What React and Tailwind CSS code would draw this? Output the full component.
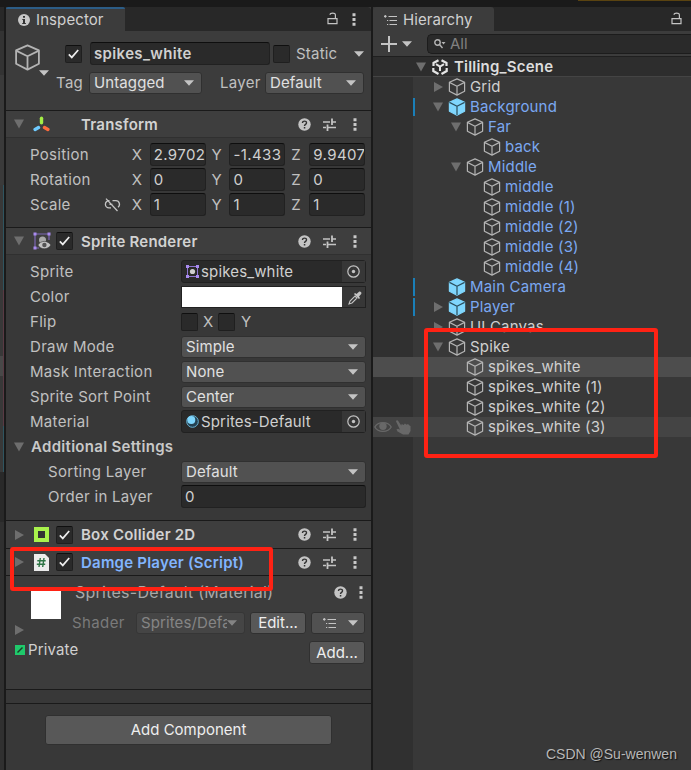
import clsx from "clsx";

const properties = [
  { label: "Draw Mode", value: "Simple" },
  { label: "Mask Interaction", value: "None" },
  { label: "Sprite Sort Point", value: "Center" },
];

const transform = [
  { label: "Position", values: ["2.9702", "-1.433", "9.9407"] },
  { label: "Rotation", values: ["0", "0", "0"] },
  { label: "Scale", values: ["1", "1", "1"], linked: true },
];

const nodes = [
  { name: "Grid", depth: 0, arrow: "right" },
  { name: "Background", depth: 0, arrow: "down", prefab: true, blue: true },
  { name: "Far", depth: 1, arrow: "down", blue: true },
  { name: "back", depth: 2, blue: true },
  { name: "Middle", depth: 1, arrow: "down", blue: true },
  { name: "middle", depth: 2, blue: true },
  { name: "middle (1)", depth: 2, blue: true },
  { name: "middle (2)", depth: 2, blue: true },
  { name: "middle (3)", depth: 2, blue: true },
  { name: "middle (4)", depth: 2, blue: true },
  { name: "Main Camera", depth: 0, prefab: true, blue: true },
  { name: "Player", depth: 0, arrow: "right", prefab: true, blue: true },
  { name: "UI Canvas", depth: 0, arrow: "right" },
  { name: "Spike", depth: 0, arrow: "down" },
  { name: "spikes_white", depth: 1, selected: true },
  { name: "spikes_white (1)", depth: 1 },
  { name: "spikes_white (2)", depth: 1 },
  { name: "spikes_white (3)", depth: 1, hover: true },
];

const indents = ["pl-[20px]", "pl-[38px]", "pl-[55px]"];

function Caret({ className = "" }) {
  return (
    <svg width="10" height="6" viewBox="0 0 10 6" className={clsx("shrink-0 fill-[#c4c4c4]", className)}>
      <path d="M0 .3h10L5 5.7z" />
    </svg>
  );
}

function Foldout({ dir, className = "" }) {
  return (
    <svg width="10" height="10" viewBox="0 0 10 10" className={clsx("shrink-0 overflow-visible fill-[#6e6e6e]", className)}>
      {dir === "down" && <path d="M0 .5h10L5 9.5z" />}
      {dir === "right" && <path d="M1 0v10l9-5z" />}
    </svg>
  );
}

function Cube({ size = 18, prefab = false, className = "" }) {
  return (
    <svg width={size} height={size} viewBox="0 0 18 18" className={clsx("shrink-0", className)} strokeLinejoin="round">
      <path
        d="M9 .9l7.6 3.3v9L9 17.1 1.4 13.2v-9z"
        fill={prefab ? "#7fd6fd" : "none"}
        stroke={prefab ? "#7fd6fd" : "#b4b4b4"}
        strokeWidth="1.2"
      />
      <path d="M1.4 4.4L9 8.2l7.6-3.8M9 8.2V17" fill="none" stroke={prefab ? "#2b4d5c" : "#b4b4b4"} strokeWidth="1.2" />
    </svg>
  );
}

function Dots() {
  return (
    <svg width="4" height="13" viewBox="0 0 4 13" className="shrink-0 fill-[#c8c8c8]">
      <path d="M.5.3h3v3h-3zM.5 5h3v3h-3zM.5 9.7h3v3h-3z" />
    </svg>
  );
}

function Lock() {
  return (
    <svg width="11" height="13" viewBox="0 0 11 13" className="mb-[2px] shrink-0" fill="none" stroke="#c4c4c4" strokeWidth="1.2">
      <path d="M1 6.6h9v5H1zM3 2.8C3.200.6 8.4.4 8.4 3v3.500" />
    </svg>
  );
}

function Help() {
  return (
    <svg width="13" height="13" viewBox="0 0 13 13" className="shrink-0">
      <circle cx="6.5" cy="6.5" r="6.2" fill="#c4c4c4" />
      <path d="M4.5 5C4.5 2.4 8.6 2.5 8.5 5c0 1.4-2 1.4-2 3" fill="none" stroke="#333" strokeWidth="1.4" />
      <path d="M5.8 9h1.5v1.5H5.8z" fill="#333" />
    </svg>
  );
}

function Preset() {
  return (
    <svg width="13" height="13" viewBox="0 0 13 13" className="shrink-0" fill="none" stroke="#c4c4c4" strokeWidth="1.5">
      <path d="M0 4h7M9 4h4M0 9.500h3M5 9.500h8" />
      <path d="M9 .5V7M4.500 6.500V13" strokeWidth="1.8" />
    </svg>
  );
}

function ListIcon() {
  return (
    <svg width="13" height="11" viewBox="0 0 13 11" className="shrink-0" fill="none" stroke="#c4c4c4" strokeWidth="1.1">
      <path d="M0 1.4h2.6M1.3 0v2.8M4.5 1.5H13M3 5.5h1.2M5.5 5.5H13M3 9.5h1.2M5.5 9.5H13" />
    </svg>
  );
}

function Check({ checked = false, className = "" }) {
  return (
    <span className={clsx("flex h-[18px] w-[17px] shrink-0 items-center justify-center rounded-[2px] border border-[#1f1f1f] border-t-[#0f0f0f] bg-[#2a2a2a]", className)}>
      {checked && (
        <svg width="11" height="10" viewBox="0 0 11 10" fill="none" stroke="#eee" strokeWidth="1.7">
          <path d="M.8 5.4l3 3L10.2 1" />
        </svg>
      )}
    </span>
  );
}

function Dropdown({ children, className = "", dim = false }) {
  return (
    <div className={clsx("flex h-[22px] items-center justify-between rounded-[3px] border pr-[7px] pl-1 tracking-[0.1px]", dim ? "border-[#363636] bg-[#454545] text-[#858585]" : "border-[#303030] bg-[#515151] text-[#e0e0e0]", className)}>
      <span className="overflow-hidden">{children}</span>
      <Caret className={dim ? "opacity-50" : ""} />
    </div>
  );
}

function Field({ children, className = "" }) {
  return (
    <div className={clsx("flex h-[23px] items-center overflow-hidden rounded-[3px] border border-[#212121] border-t-[#0e0e0e] bg-[#2a2a2a] pt-px pl-[3px] text-[#d0d0d0]", className)}>
      {children}
    </div>
  );
}

function ComponentHeader({ title, icon, open = false, checkbox = true, blue = false, className = "" }) {
  return (
    <div className={clsx("flex items-center border-t border-t-[#1a1a1a] bg-[#3e3e3e] pr-[14px] pl-2", className)}>
      <Foldout dir={open ? "down" : "right"} />
      <span className="ml-[9px] flex w-[17px] justify-center">{icon}</span>
      {checkbox ? <Check checked className="mx-[6px]" /> : <span className="w-[29px]" />}
      <span className={clsx("ml-[2px] flex-1 pt-px font-semibold tracking-[0.22px]", blue ? "text-[#81b4ff]" : "text-[#d2d2d2]")}>{title}</span>
      <div className="flex items-center">
        <Help />
        <span className="mr-[17px] ml-3"><Preset /></span>
        <Dots />
      </div>
    </div>
  );
}

function Row({ label, children, indent = false }) {
  return (
    <div className="flex h-[25px] items-center">
      <span className={clsx("w-[175px] shrink-0 tracking-[0.3px] text-[#c0c0c0]", indent ? "pl-[42px]" : "pl-6")}>{label}</span>
      {children}
    </div>
  );
}

function SpriteIcon() {
  return (
    <svg width="13" height="13" viewBox="0 0 13 13" className="shrink-0">
      <path d="M1.5 1.5h10v10h-10z" fill="none" stroke="#8f74d0" />
      <path d="M0 0h3v3H0zM10 0h3v3h-3zM0 10h3v3H0zM10 10h3v3h-3z" fill="#a98bf0" />
      <circle cx="6.5" cy="6.5" r="2.6" fill="#cfcfcf" />
    </svg>
  );
}

function SpriteRendererIcon() {
  return (
    <svg width="18" height="18" viewBox="0 0 18 18" className="shrink-0">
      <path d="M2 16V2h14v6M2 16h4" fill="none" stroke="#7d68b5" strokeWidth="1.2" />
      <path d="M.5.5h3v3h-3zM14.5.5h3v3h-3zM.5 14.5h3v3h-3z" fill="#a98bf0" />
      <circle cx="9.5" cy="8" r="3.5" fill="#aaa" />
      <path d="M5 13c2.5-4.8 10-4.8 12.8 0-2.8 5-10.3 5-12.8 0z" fill="#c4c4c4" stroke="#3e3e3e" strokeWidth=".6" />
      <circle cx="11.4" cy="13" r="2.2" fill="#555" />
    </svg>
  );
}

function ObjectField({ icon, children }) {
  return (
    <div className="flex h-[23px] w-[185px] items-center rounded-[3px] border border-[#212121] bg-[#2a2a2a] pl-1 text-[#d0d0d0]">
      {icon}
      <span className="ml-[2px] flex-1 pt-px tracking-[0.15px]">{children}</span>
      <span className="flex h-[21px] w-[23px] items-center justify-center bg-[#373737]">
        <svg width="13" height="13" viewBox="0 0 13 13">
          <circle cx="6.5" cy="6.5" r="5.7" fill="none" stroke="#c4c4c4" strokeWidth="1.2" />
          <circle cx="6.5" cy="6.5" r="1.7" fill="#c4c4c4" />
        </svg>
      </span>
    </div>
  );
}

function Inspector() {
  return (
    <section className="flex w-[365px] shrink-0 flex-col bg-[#383838]">
      <div className="flex h-6 items-center justify-between rounded-t bg-[#282828] pr-[15px]">
        <div className="flex h-6 w-[119px] items-center rounded-t-[2px] border-t-2 border-[#2c5d87] bg-[#3c3c3c] pl-3 text-[#d0d0d0]">
          <svg width="12" height="12" viewBox="0 0 12 12">
            <circle cx="6" cy="6" r="6" fill="#c8c8c8" />
            <path d="M5 2h2v1.8H5zM4.3 5H7v4h.9v1H4.2V9H5V6h-.7z" fill="#333" />
          </svg>
          <span className="ml-[6px] tracking-[0.1px]">Inspector</span>
        </div>
        <div className="flex items-center gap-[14px]">
          <Lock />
          <Dots />
        </div>
      </div>

      <div className="flex h-[79px] bg-[#3c3c3c] pt-[11px] pl-2">
        <div className="relative w-[51px] pt-[2px]">
          <Cube size={27} />
          <Caret className="absolute top-[28px] left-[25px]" />
        </div>
        <div>
          <div className="flex h-[23px] items-center">
            <Check checked />
            <Field className="ml-2 w-[180px] font-semibold tracking-[0.35px]">spikes_white</Field>
            <Check className="ml-[3px]" />
            <span className="ml-[6px] w-[41px] tracking-[0.2px] text-[#c0c0c0]">Static</span>
            <Caret className="ml-[17px]" />
          </div>
          <div className="mt-[7px] flex items-center tracking-[0.3px] text-[#c0c0c0]">
            <span className="-ml-[9px] w-[33px]">Tag</span>
            <Dropdown className="w-[113px]">Untagged</Dropdown>
            <span className="ml-[18px] w-[45px]">Layer</span>
            <Dropdown className="w-[99px]">Default</Dropdown>
          </div>
        </div>
      </div>

      <ComponentHeader
        title="Transform"
        open
        checkbox={false}
        className="h-[28px] border-b border-b-[#303030]"
        icon={
          <svg width="17" height="17" viewBox="0 0 17 17" strokeWidth="3.4" fill="none" strokeLinecap="round">
            <path d="M8.5 2.2v4.500" stroke="#a4ee45" />
            <path d="M5.500 11.600l-3.400 1.900" stroke="#6fcbff" />
            <path d="M11.500 11.600l3.400 1.900" stroke="#ff6b3d" />
          </svg>
        }
      />
      <div className="h-[89px] pt-1">
        {transform.map((row) => (
          <div key={row.label} className="flex h-[25px] items-center text-[#c0c0c0]">
            <span className="w-[98px] pl-6 tracking-[0.3px]">{row.label}</span>
            <span className="w-7">
              {row.linked && (
                <svg width="17" height="14" viewBox="0 0 17 14" fill="none" stroke="#c4c4c4" strokeWidth="1.3">
                  <path d="M5.500 2.700H5a3.600 3.600 0 000 7.200h2M8.500 2.700H12a3.600 3.600 0 012 6.500M5.500 6.300h3M2 .6l11.500 12.400" />
                </svg>
              )}
            </span>
            {["X", "Y", "Z"].map((axis, i) => (
              <div key={axis} className="flex w-20 items-center">
                <span className="w-[18px]">{axis}</span>
                <Field className="w-14 tracking-[0.4px]">{row.values[i]}</Field>
              </div>
            ))}
          </div>
        ))}
      </div>

      <ComponentHeader title="Sprite Renderer" open className="h-[28px] border-b border-b-[#303030]" icon={<SpriteRendererIcon />} />
      <div className="h-[265px] pt-1">
        <Row label="Sprite">
          <ObjectField icon={<SpriteIcon />}>spikes_white</ObjectField>
        </Row>
        <Row label="Color">
          <div className="flex h-[22px] w-[185px] border border-[#212121] bg-[#373737]">
            <span className="w-[160px] bg-white" />
            <svg width="14" height="14" viewBox="0 0 14 14" className="mt-1 ml-[6px]">
              <path d="M1 13l1-3 5-5 2 2-5 5z" fill="none" stroke="#c4c4c4" strokeWidth="1.1" />
              <path d="M6 3l1-1 1.5 1L11 .7c1.5-.8 3 .8 2.2 2.2L11 5.5 12 7l-1 1z" fill="#c4c4c4" />
            </svg>
          </div>
        </Row>
        <Row label="Flip">
          <Check />
          <span className="w-5 pl-[5px] text-[#c0c0c0]">X</span>
          <Check />
          <span className="pl-[6px] text-[#c0c0c0]">Y</span>
        </Row>
        {properties.map((p) => (
          <Row key={p.label} label={p.label}>
            <Dropdown className="w-[185px]">{p.value}</Dropdown>
          </Row>
        ))}
        <Row label="Material">
          <ObjectField
            icon={
              <svg width="13" height="13" viewBox="0 0 13 13" className="shrink-0">
                <circle cx="6.5" cy="6.5" r="5.8" fill="#244152" stroke="#69b4d6" />
                <circle cx="5.3" cy="5" r="4" fill="#7fd6fd" />
              </svg>
            }
          >
            Sprites-Default
          </ObjectField>
        </Row>
        <div className="flex h-[25px] items-center pl-2">
          <Foldout dir="down" />
          <span className="ml-[7px] font-semibold tracking-[0.3px] text-[#c8c8c8]">Additional Settings</span>
        </div>
        <Row label="Sorting Layer" indent>
          <Dropdown className="w-[185px]">Default</Dropdown>
        </Row>
        <Row label="Order in Layer" indent>
          <Field className="w-[185px]">0</Field>
        </Row>
      </div>

      <ComponentHeader
        title="Box Collider 2D"
        className="h-[28px]"
        icon={<span className="h-[15px] w-[15px] border-[4px] border-[#a9f24c] bg-[#333]" />}
      />
      <ComponentHeader
        title="Damge Player (Script)"
        blue
        className="h-[27px]"
        icon={
          <svg width="15" height="17" viewBox="0 0 15 17">
            <path d="M0 0h11l4 4v13H0z" fill="#ececec" />
            <path d="M6.3 4L5 13M10 4l-1.3 9M3.3 6.8h8.4M2.8 10.3h8.4" stroke="#2f7546" strokeWidth="1.4" />
          </svg>
        }
      />

      <div className="h-[114px] border-t border-[#1a1a1a] bg-[#3c3c3c]">
        <div className="flex h-[65px]">
          <div className="flex w-[64px] flex-col pl-2">
            <span className="mt-[13px] ml-[17px] h-[30px] w-[30px] shrink-0 bg-white" />
            <Foldout dir="right" className="mt-[6px]" />
          </div>
          <div className="flex-1 pt-1">
            <div className="flex h-6 items-center pr-2">
              <span className="flex-1 pl-[5px] text-[16px] tracking-[0.25px] text-[#a8a8a8]">Sprites-Default (Material)</span>
              <span className="mr-[12px]"><Help /></span>
              <Dots />
            </div>
            <div className="mt-2 flex items-center">
              <span className="w-[66px] pl-[2px] tracking-[0.4px] text-[#7a7a7a]">Shader</span>
              <Dropdown dim className="w-[109px] pr-[6px]">Sprites/Defa</Dropdown>
              <button type="button" className="ml-[5px] h-[22px] w-14 rounded-[3px] border border-[#303030] bg-[#585858] text-[#eee]">Edit...</button>
              <button type="button" className="ml-[5px] flex h-[22px] w-[54px] items-center justify-between rounded-[3px] border border-[#303030] bg-[#515151] pr-[6px] pl-[11px]">
                <ListIcon />
                <Caret />
              </button>
            </div>
          </div>
        </div>
        <div className="flex pr-[6px] pl-[9px]">
          <svg width="10" height="10" viewBox="0 0 10 10" className="mt-1">
            <path d="M0 0h10v10H0z" fill="#1fc96b" />
            <path d="M2.5 7.5l5-5" stroke="#1c3a29" strokeWidth="1.5" />
          </svg>
          <span className="ml-[3px] flex-1 tracking-[0.15px] text-[#d0d0d0]">Private</span>
          <button type="button" className="h-[23px] w-14 rounded-[3px] border border-[#303030] bg-[#585858] text-[#eee]">Add...</button>
        </div>
      </div>
      <div className="h-[14px] border-t border-[#1a1a1a]" />
      <div className="flex-1 border-t border-[#1a1a1a] pt-[11px] pl-[39px]">
        <button type="button" className="h-[30px] w-[287px] rounded-[3px] border border-[#303030] bg-[#585858] text-[#eee]">Add Component</button>
      </div>
    </section>
  );
}

function TreeRow({ node }) {
  return (
    <div className={clsx("flex h-5", node.selected && "bg-[#4d4d4d]", node.hover && "bg-[#444444]")}>
      <div className={clsx("flex w-10 items-center gap-1", !node.selected && !node.hover && "bg-[#303030]")}>
        {node.hover && (
          <>
            <svg width="18" height="12" viewBox="0 0 18 12" className="ml-px">
              <path d="M.8 6C4 .2 14 .2 17.2 6 14 11.8 4 11.8.8 6z" fill="none" stroke="#686868" strokeWidth="1.3" />
              <circle cx="9" cy="5.3" r="3.7" fill="#686868" />
            </svg>
            <svg width="15" height="15" viewBox="0 0 15 15" fill="#686868">
              <path d="M0 1.3C.3 0 1.7 0 2.2 1l3 4.5.5-1.4 2 .8 1.2-1.4 1.7 1.2 1.4-.7 1.5 1.5 1 .5v5l-2 3.500H7l-5.500-3-1-2 1.500-.7 2 1z" />
            </svg>
          </>
        )}
      </div>
      <span className={clsx("w-[2px]", node.prefab && "my-px bg-[#1a7fb8]")} />
      <div className={clsx("flex items-center", indents[node.depth])}>
        <Foldout dir={node.arrow} className="-ml-[2px]" />
        <Cube prefab={node.prefab} className="ml-[5px]" />
        <span className={clsx("ml-1 tracking-[0.18px] whitespace-nowrap", node.blue ? "text-[#7ba8f2]" : "text-[#d0d0d0]")}>{node.name}</span>
      </div>
    </div>
  );
}

function Hierarchy() {
  return (
    <section className="flex flex-1 flex-col bg-[#383838]">
      <div className="flex h-6 items-center justify-between rounded-tl bg-[#282828] pr-[9px]">
        <div className="flex h-6 w-[121px] items-center rounded-t-[3px] bg-[#3c3c3c] pt-[2px] pl-[11px] text-[#d0d0d0]">
          <ListIcon />
          <span className="ml-[6px] tracking-[0.1px]">Hierarchy</span>
        </div>
        <Lock />
      </div>
      <div className="flex h-[25px] items-center bg-[#3c3c3c] pl-2">
        <svg width="16" height="16" viewBox="0 0 16 16" stroke="#c4c4c4" strokeWidth="2">
          <path d="M8 0v16M0 8h16" />
        </svg>
        <Caret className="ml-[5px]" />
        <div className="ml-[15px] flex h-[20px] flex-1 items-center rounded-l-[5px] border border-r-0 border-[#1c1c1c] bg-[#2a2a2a] pl-[6px] text-[#808080]">
          <svg width="12" height="10" viewBox="0 0 12 10" fill="none" stroke="#b4b4b4" strokeWidth="1.4">
            <circle cx="3.5" cy="3.5" r="2.7" />
            <path d="M5.5 5.5L8.5 9" />
            <path d="M7.5 3h4L9.5 5.5z" fill="#b4b4b4" stroke="none" />
          </svg>
          <span className="ml-[4px]">All</span>
        </div>
      </div>
      <div className="flex h-[21px] items-center border-t border-b border-t-[#1f1f1f] border-b-[#444] bg-[#2d2d2d] pl-[43px]">
        <Foldout dir="down" />
        <svg width="16" height="16" viewBox="0 0 16 16" className="ml-[6px]" fill="none" stroke="#e4e4e4" strokeWidth="2.2">
          <path d="M6.5 1.2L1.5 4v3M9.5 1.2L14.5 4v3M1.3 9v3L6.5 15M14.7 9v3L9.5 15" />
          <path d="M4 5.2L8 7.5l4-2.3M8 7.5V12" strokeWidth="2" />
        </svg>
        <span className="ml-[6px] font-semibold tracking-[0.2px] text-[#dcdcdc]">Tilling_Scene</span>
      </div>
      {nodes.map((node) => (
        <TreeRow key={node.name} node={node} />
      ))}
      <div className="w-10 flex-1 bg-[#303030]" />
    </section>
  );
}

// Sliver of the neighbouring docked panel
function LeftEdge() {
  return (
    <div className="flex w-[4px] flex-col">
      <span className="h-[24px] bg-[#282828]" />
      <span className="h-[44px] bg-[#333333]" />
      <span className="h-[110px] bg-[#3a3a3a]" />
      <span className="h-[105px] border-r border-[#2f5560] bg-[#383838]" />
      <span className="h-[66px] border-r border-[#5a3a44] bg-[#383838]" />
      <span className="h-[20px] border-r border-[#5a3a44] bg-[#484848]" />
      <span className="h-[50px] border-r border-[#5a3a44] bg-[#383838]" />
      <span className="h-[46px] border-r border-[#2f5560] bg-[#383838]" />
      <span className="h-[50px] bg-[#292929]" />
      <span className="flex-1 bg-[#303030]" />
    </div>
  );
}

export default function App() {
  return (
    <div className="relative flex h-[770px] w-[691px] flex-col overflow-hidden bg-[#1a1a1a] font-['Inter',sans-serif] text-[15px] leading-[18px]">
      <div className="h-[7px] shrink-0">
        <span className="ml-auto block h-px w-[113px] bg-[#5a4310]" />
      </div>
      <div className="flex flex-1">
        <LeftEdge />
        <div className="w-[2px]" />
        <Inspector />
        <div className="w-[2px]" />
        <Hierarchy />
      </div>
      <div className="absolute top-[547px] left-[10px] h-[44px] w-[263px] rounded-[3px] border-4 border-[#ff2214]" />
      <div className="absolute top-[328px] left-[424px] h-[130px] w-[234px] rounded-[3px] border-4 border-[#ff2214]" />
      <span className="absolute top-[745px] left-[546px] font-['Liberation_Sans',sans-serif] text-[14px] whitespace-nowrap text-[#b8b8b8] [text-shadow:1px_1px_1px_#111]">CSDN @Su-wenwen</span>
    </div>
  );
}
